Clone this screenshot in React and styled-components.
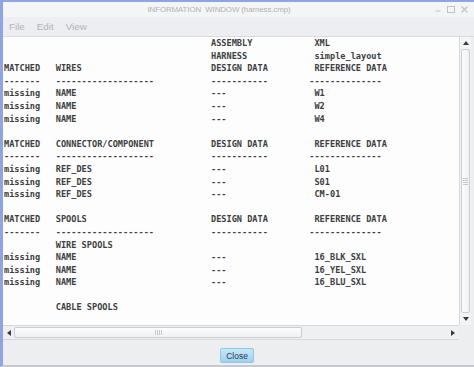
import styled, { createGlobalStyle } from "styled-components";

const GlobalStyle = createGlobalStyle`
  html, body {
    margin: 0;
    padding: 0;
  }
  body {
    width: 474px;
    height: 367px;
    overflow: hidden;
    background: #eceef0;
  }
`;

const Window = styled.div`
  width: 474px;
  height: 367px;
  box-sizing: border-box;
  display: flex;
  flex-direction: column;
  border-left: 3px solid #8fa4e2;
  border-top: 2px solid #8fa4e2;
  border-bottom: 2px solid #c6c9ce;
  background: #eceef0;
  font-family: "Liberation Sans", Arial, sans-serif;
`;

const TitleBar = styled.div`
  height: 15px;
  display: flex;
  align-items: center;
  background: #f4f5f7;
`;

const Title = styled.div`
  flex: 1;
  text-align: center;
  font-size: 7.9px;
  letter-spacing: -0.1px;
  color: #b1b1b1;
  white-space: pre;
`;

const Controls = styled.div`
  display: flex;
  align-items: center;
  gap: 6px;
  padding-right: 6px;
  color: #c2c2c2;
`;

const MenuBar = styled.div`
  height: 19px;
  display: flex;
  align-items: center;
  gap: 12px;
  padding-left: 6px;
  background: #eceef1;
  border-bottom: 1px solid #d9dbde;
`;

const MenuItem = styled.span`
  font-size: 9.8px;
  color: #b3b3b3;
`;

const ScrollPane = styled.div`
  height: 303px;
  display: grid;
  grid-template-columns: 456px 12px;
  grid-template-rows: 288px 15px;
  padding-right: 3px;
`;

const TextArea = styled.pre`
  margin: 0;
  padding: 0 0 0 1px;
  overflow: hidden;
  background: #fdfdfe;
  font-family: "DejaVu Sans Mono", "Liberation Mono", monospace;
  font-weight: bold;
  font-size: 8.6px;
  line-height: 12.6px;
  color: #3e3e3e;
`;

const VScroll = styled.div`
  display: flex;
  flex-direction: column;
  background: #f3f4f6;
  border-left: 1px solid #d6d9dc;
`;

const HScroll = styled.div`
  display: flex;
  align-items: stretch;
  background: #eef0f2;
  border-top: 1px solid #d6d9dc;
  border-bottom: 1px solid #d6d9dc;
`;

const Corner = styled.div`
  background: #eceef0;
`;

const ArrowButton = styled.div`
  flex: 0 0 ${(p) => (p.$wide ? "12px" : "11px")};
  display: flex;
  align-items: center;
  justify-content: center;
`;

const Thumb = styled.div`
  box-sizing: border-box;
  display: flex;
  align-items: center;
  justify-content: center;
  background: linear-gradient(${(p) => (p.$vertical ? "90deg" : "180deg")}, #fbfcfd, #eff1f3);
  border: 1px solid #c9ccd1;
  border-radius: 2px;
  ${(p) =>
    p.$vertical
      ? "margin: 0 1px; height: 265px;"
      : "margin: 1px 0; width: 288px;"}
`;

const Grip = styled.div`
  display: flex;
  flex-direction: ${(p) => (p.$vertical ? "column" : "row")};
  gap: 1px;
`;

const GripLine = styled.span`
  display: block;
  background: #c5c8cc;
  ${(p) => (p.$vertical ? "width: 5px; height: 1px;" : "width: 1px; height: 5px;")}
`;

const Spacer = styled.div`
  flex: 1;
`;

const BottomBar = styled.div`
  flex: 1;
  display: flex;
  justify-content: center;
  align-items: flex-start;
  padding-top: 8px;
  padding-right: 3px;
`;

const CloseButton = styled.button`
  width: 34px;
  height: 15px;
  padding: 0;
  border: 1px solid #93c6e6;
  border-radius: 2px;
  background: linear-gradient(#c6e7f8, #9fd1ef);
  font-family: "Liberation Sans", Arial, sans-serif;
  font-size: 8.5px;
  color: #2c3a48;
  cursor: pointer;
`;

const Arrow = ({ dir }) => {
  const pts = {
    up: "0,4 3,0 6,4",
    down: "0,0 6,0 3,4",
    left: "4,0 4,6 0,3",
    right: "0,0 0,6 4,3",
  }[dir];
  const vertical = dir === "up" || dir === "down";
  return (
    <svg width={vertical ? 6 : 4} height={vertical ? 4 : 6} viewBox={vertical ? "0 0 6 4" : "0 0 4 6"}>
      <polygon points={pts} fill="#3a3a3a" />
    </svg>
  );
};

const pad = (s, n) => s + " ".repeat(Math.max(0, n - s.length));
const line = (a = "", b = "", c = "", d = "", cw = 20) => (pad(a, 10) + pad(b, 30) + pad(c, cw) + d).trimEnd();
const dashes = (n) => "-".repeat(n);

const rows = [
  line("", "", "ASSEMBLY", "XML"),
  line("", "", "HARNESS", "simple_layout"),
  line("MATCHED", "WIRES", "DESIGN DATA", "REFERENCE DATA"),
  line(dashes(7), dashes(19), dashes(11), dashes(14), 19),
  line("missing", "NAME", "---", "W1"),
  line("missing", "NAME", "---", "W2"),
  line("missing", "NAME", "---", "W4"),
  "",
  line("MATCHED", "CONNECTOR/COMPONENT", "DESIGN DATA", "REFERENCE DATA"),
  line(dashes(7), dashes(19), dashes(11), dashes(14), 19),
  line("missing", "REF_DES", "---", "L01"),
  line("missing", "REF_DES", "---", "S01"),
  line("missing", "REF_DES", "---", "CM-01"),
  "",
  line("MATCHED", "SPOOLS", "DESIGN DATA", "REFERENCE DATA"),
  line(dashes(7), dashes(19), dashes(11), dashes(14), 19),
  line("", "WIRE SPOOLS"),
  line("missing", "NAME", "---", "16_BLK_SXL"),
  line("missing", "NAME", "---", "16_YEL_SXL"),
  line("missing", "NAME", "---", "16_BLU_SXL"),
  "",
  line("", "CABLE SPOOLS"),
];

export default function App() {
  return (
    <>
      <GlobalStyle />
      <Window>
        <TitleBar>
          <Title>INFORMATION  WINDOW (harness.cmp)</Title>
          <Controls>
            <svg width="6" height="6" viewBox="0 0 6 6">
              <line x1="0.5" y1="4" x2="5.5" y2="4" stroke="currentColor" strokeWidth="1" />
            </svg>
            <svg width="8" height="7" viewBox="0 0 8 7">
              <rect x="0.5" y="0.5" width="7" height="6" fill="none" stroke="currentColor" strokeWidth="1" />
            </svg>
            <svg width="7" height="7" viewBox="0 0 7 7">
              <path d="M0.5 0.5 L6.5 6.5 M6.5 0.5 L0.5 6.5" stroke="currentColor" strokeWidth="1.2" />
            </svg>
          </Controls>
        </TitleBar>
        <MenuBar>
          <MenuItem>File</MenuItem>
          <MenuItem>Edit</MenuItem>
          <MenuItem>View</MenuItem>
        </MenuBar>
        <ScrollPane>
          <TextArea>{rows.join("\n")}</TextArea>
          <VScroll>
            <ArrowButton $wide>
              <Arrow dir="up" />
            </ArrowButton>
            <Thumb $vertical>
              <Grip $vertical>
                <GripLine $vertical />
                <GripLine $vertical />
                <GripLine $vertical />
                <GripLine $vertical />
              </Grip>
            </Thumb>
            <Spacer />
            <ArrowButton $wide>
              <Arrow dir="down" />
            </ArrowButton>
          </VScroll>
          <HScroll>
            <ArrowButton>
              <Arrow dir="left" />
            </ArrowButton>
            <Thumb>
              <Grip>
                <GripLine />
                <GripLine />
                <GripLine />
                <GripLine />
              </Grip>
            </Thumb>
            <Spacer />
            <ArrowButton $wide>
              <Arrow dir="right" />
            </ArrowButton>
          </HScroll>
          <Corner />
        </ScrollPane>
        <BottomBar>
          <CloseButton>Close</CloseButton>
        </BottomBar>
      </Window>
    </>
  );
}
